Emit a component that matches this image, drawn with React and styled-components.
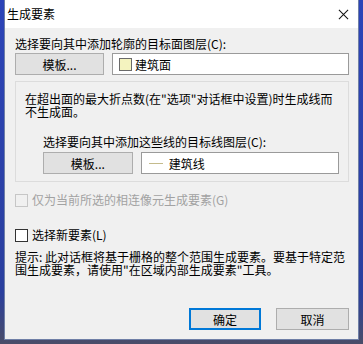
import styled, { createGlobalStyle } from "styled-components"

const GlobalStyle = createGlobalStyle`
  html, body {
    margin: 0;
    padding: 0;
    background: #2c44b8;
  }
  body {
    font-family: "Noto Sans CJK SC", "Microsoft YaHei", sans-serif;
    font-size: 12px;
    color: #000;
  }
`

export default function App() {
  return (
    <Page>
      <GlobalStyle />
      <Window>
        <TitleBar>
          <Title>生成要素</Title>
          <CloseIcon viewBox="0 0 12 12">
            <path d="M1 1 L11 11 M11 1 L1 11" stroke="#111" strokeWidth="1.1" />
          </CloseIcon>
        </TitleBar>

        <Body>
          <Label>选择要向其中添加轮廓的目标面图层(C):</Label>
          <FieldRow>
            <Button $width={89}>模板...</Button>
            <Field>
              <Swatch />
              建筑面
            </Field>
          </FieldRow>

          <Group>
            <Note>
              在超出面的最大折点数(在"选项"对话框中设置)时生成线而
              <br />
              不生成面。
            </Note>
            <Inner>
              <Label>选择要向其中添加这些线的目标线图层(C):</Label>
              <FieldRow $top={2}>
                <Button $width={90}>模板...</Button>
                <Field $width={199}>
                  <LineMark />
                  建筑线
                </Field>
              </FieldRow>
            </Inner>
          </Group>

          <Check $disabled $top={10}>
            <Box $disabled />
            仅为当前所选的相连像元生成要素(G)
          </Check>

          <Check $top={19}>
            <Box />
            选择新要素(L)
          </Check>

          <Hint>
            提示: 此对话框将基于栅格的整个范围生成要素。要基于特定范
            <br />
            围生成要素，请使用"在区域内部生成要素"工具。
          </Hint>

          <Footer>
            <Button $width={72} $default>确定</Button>
            <Button $width={73}>取消</Button>
          </Footer>
        </Body>
      </Window>
    </Page>
  )
}

const Page = styled.div`
  width: 363px;
  height: 344px;
  padding-left: 4px;
  box-sizing: border-box;
  background: linear-gradient(180deg, #2c44b8 0%, #2a3f9e 85%, #4a4d68 100%);
`
const Window = styled.div`
  width: 355px;
  height: 340px;
  box-sizing: border-box;
  border: 1px solid #6f7fa6;
  border-top: none;
  background: #f0f0f0;
  display: flex;
  flex-direction: column;
`
const TitleBar = styled.div`
  height: 28px;
  background: #fff;
  display: flex;
  align-items: center;
  justify-content: space-between;
  padding: 0 9px 0 2px;
`
const Title = styled.div`
  font-size: 12px;
  line-height: 16px;
`
const CloseIcon = styled.svg`
  width: 11px;
  height: 11px;
`
const Body = styled.div`
  display: flex;
  flex-direction: column;
  padding: 0 9px 0 10px;
`
const Label = styled.div`
  margin-top: 8px;
  line-height: 16px;
  white-space: nowrap;
`
const FieldRow = styled.div`
  display: flex;
  gap: 8px;
  margin-top: ${(p) => p.$top ?? 1}px;
`
const Button = styled.div`
  width: ${(p) => p.$width}px;
  height: 22px;
  box-sizing: border-box;
  display: flex;
  align-items: center;
  justify-content: center;
  background: #e1e1e1;
  border: 1px solid ${(p) => (p.$default ? "#0078d7" : "#adadad")};
  box-shadow: ${(p) => (p.$default ? "inset 0 0 0 1px #0078d7" : "none")};
`
const Field = styled.div`
  ${(p) => (p.$width ? `width: ${p.$width}px;` : "flex: 1;")}
  height: 22px;
  box-sizing: border-box;
  background: #fff;
  border: 1px solid #9a9a9a;
  display: flex;
  align-items: center;
  gap: 3px;
  padding-left: 6px;
`
const Swatch = styled.div`
  width: 13px;
  height: 13px;
  box-sizing: border-box;
  background: #f4f3bf;
  border: 1px solid #6a6a6a;
`
const LineMark = styled.div`
  width: 14px;
  height: 1px;
  margin: 0 3px 0 1px;
  background: #c4bb8c;
`
const Group = styled.div`
  margin-top: 6px;
  height: 101px;
  box-sizing: border-box;
  border: 1px solid #dcdcdc;
  padding: 10px 9px 0;
`
const Note = styled.div`
  line-height: 13px;
`
const Inner = styled.div`
  display: flex;
  flex-direction: column;
  padding-left: 18px;
  margin-top: 8px;
`
const Check = styled.div`
  display: flex;
  align-items: center;
  gap: 4px;
  margin-top: ${(p) => p.$top}px;
  line-height: 16px;
  color: ${(p) => (p.$disabled ? "#a2a2a2" : "#000")};
`
const Box = styled.div`
  width: 13px;
  height: 13px;
  box-sizing: border-box;
  background: ${(p) => (p.$disabled ? "#f0f0f0" : "#fff")};
  border: 1px solid ${(p) => (p.$disabled ? "#c6c6c6" : "#333")};
`
const Hint = styled.div`
  margin-top: 7px;
  line-height: 13px;
  white-space: nowrap;
`
const Footer = styled.div`
  display: flex;
  justify-content: flex-end;
  gap: 15px;
  margin-top: 32px;
`
